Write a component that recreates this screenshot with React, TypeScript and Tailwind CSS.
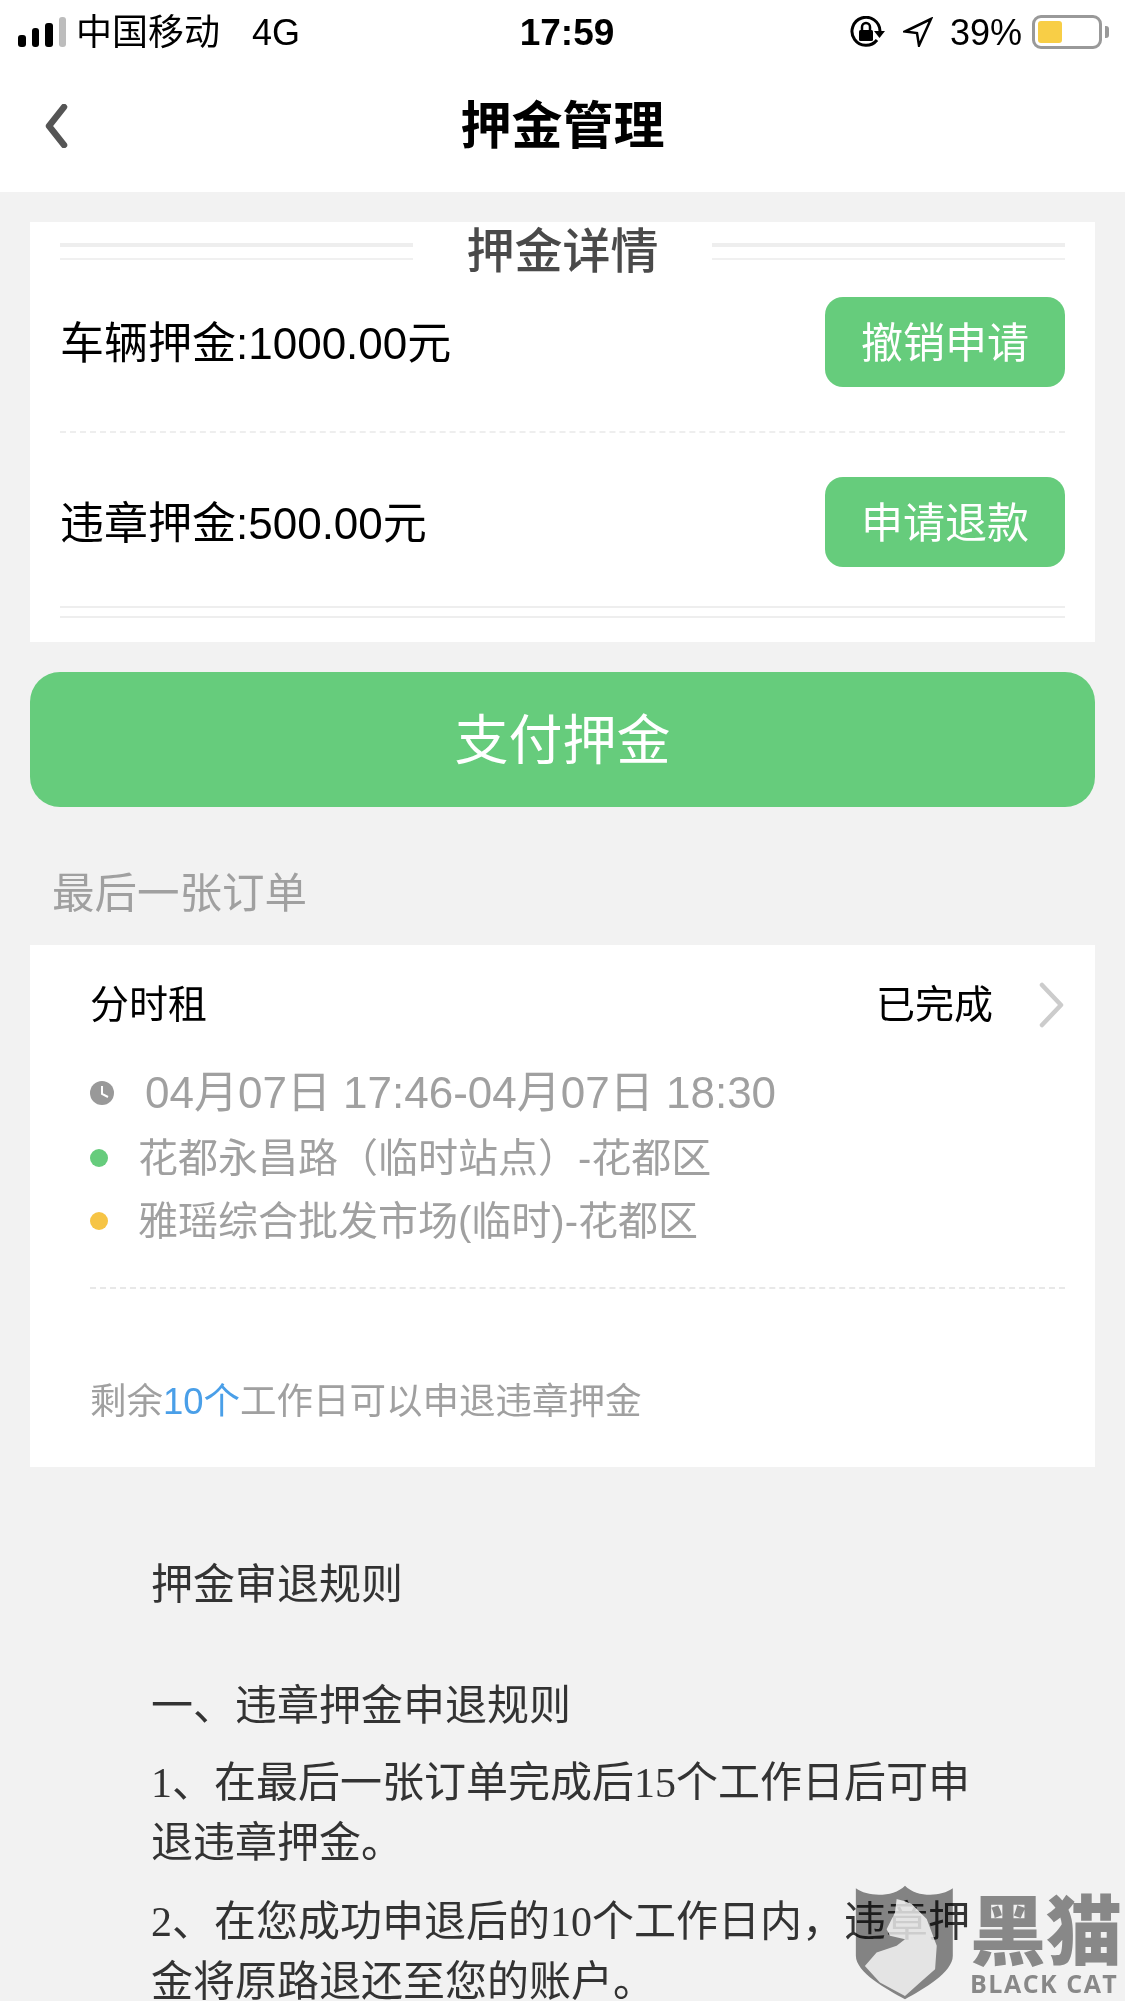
const sans = "font-['Liberation_Sans','Noto_Sans_CJK_SC',sans-serif]";

const SignalBars = () => (
  <div className="flex items-end gap-[6px] h-[30px] w-[48px]">
    <span className="w-[8px] h-[12px] rounded-[3px] bg-black" />
    <span className="w-[8px] h-[19px] rounded-[3px] bg-black" />
    <span className="w-[8px] h-[24px] rounded-[3px] bg-black" />
    <span className="w-[8px] h-[30px] rounded-[3px] bg-[#bdbdbd]" />
  </div>
);

const StatusBar = () => (
  <div className="grid grid-cols-3 items-center h-[64px] pl-[18px] pr-[16px] text-black">
    <div className="flex items-center">
      <SignalBars />
      <span className="ml-[10px] pt-[1px] text-[36px] leading-none">中国移动</span>
      <span className="ml-[32px] pt-[1px] text-[36px] leading-none">4G</span>
    </div>
    <div className="text-center pl-[7px] pt-[1px] text-[37px] leading-none font-bold">17:59</div>
    <div className="flex items-center justify-end">
      <svg width="36" height="32" viewBox="0 0 36 32" fill="none">
        <path d="M27 24A14 14 0 1 1 30 15" stroke="#000" strokeWidth="3" />
        <path d="M24 15h11l-5.500 7z" fill="#000" />
        <rect x="9" y="14" width="14" height="11" rx="1.500" fill="#000" />
        <path d="M12 14v-3a4 4 0 0 1 8 0v3" stroke="#000" strokeWidth="2.500" />
      </svg>
      <svg className="ml-[17px]" width="30" height="30" viewBox="0 0 30 30" fill="none">
        <path d="M28 2 2 14.500l12 1.500 2 12.500z" stroke="#000" strokeWidth="2.500" strokeLinejoin="miter" />
      </svg>
      <span className="ml-[17px] pt-[1px] text-[36px] leading-none">39%</span>
      <div className="ml-[10px] w-[70px] h-[34px] rounded-[9px] border-[3px] border-[#999999] p-[3px]">
        <div className="w-[24px] h-full rounded-[3px] bg-[#f8ce46]" />
      </div>
      <div className="ml-[3px] w-[4px] h-[12px] rounded-r-[3px] bg-[#999999]" />
    </div>
  </div>
);

const NavBar = () => (
  <div className="grid grid-cols-3 items-center h-[128px] pb-[4px]">
    <div className="pl-[44px] flex">
      <svg width="24" height="44" viewBox="0 0 24 44" fill="none">
        <path d="M20 3 5 22l15 19" stroke="#555555" strokeWidth="6.500" strokeLinecap="round" strokeLinejoin="round" />
      </svg>
    </div>
    <h1 className="text-center text-[51px] leading-none font-bold text-black whitespace-nowrap">押金管理</h1>
  </div>
);

const TitleLines = () => (
  <div className="flex-1 flex flex-col mt-[-2px]">
    <div className="h-[4px] bg-[#eeeeee]" />
    <div className="h-[2px] mt-[11px] bg-[#f0f0f0]" />
  </div>
);

const DepositRow = ({ label, action }: { label: string; action: string }) => (
  <div className="flex items-center justify-between h-[90px]">
    <span className="pt-[3px] text-[44px] leading-none text-black">{label}</span>
    <button className="w-[240px] h-[90px] pt-[3px] rounded-[18px] bg-[#66cc7c] text-white text-[42px] leading-none">{action}</button>
  </div>
);

const DepositCard = () => (
  <section className="bg-white h-[420px] px-[30px]">
    <div className="flex items-center h-[60px]">
      <TitleLines />
      <h2 className="w-[299px] text-center text-[48px] leading-none font-medium text-[#4a4a4a]">押金详情</h2>
      <TitleLines />
    </div>
    <div className="pt-[15px]">
      <DepositRow label="车辆押金:1000.00元" action="撤销申请" />
      <div className="mt-[44px] border-t-2 border-dashed border-[#eeeeee]" />
      <div className="mt-[44px]">
        <DepositRow label="违章押金:500.00元" action="申请退款" />
      </div>
      <div className="mt-[39px] h-[2px] bg-[#eeeeee]" />
      <div className="mt-[8px] h-[2px] bg-[#eeeeee]" />
    </div>
  </section>
);

const OrderCard = () => (
  <section className="bg-white h-[522px] pl-[60px] pr-[30px]">
    <div className="flex items-center justify-between h-[120px] text-[39px] leading-none text-black">
      <span>分时租</span>
      <div className="flex items-center">
        <span>已完成</span>
        <svg className="ml-[46px]" width="26" height="46" viewBox="0 0 26 46" fill="none">
          <path d="M3 3l19 20L3 43" stroke="#cccccc" strokeWidth="4.500" strokeLinecap="round" strokeLinejoin="round" />
        </svg>
      </div>
    </div>
    <div className="flex items-center h-[28px] mt-[14px] text-[#a0a0a0] text-[44px] leading-none">
      <svg width="24" height="24" viewBox="0 0 24 24">
        <circle cx="12" cy="12" r="12" fill="#999999" />
        <path d="M12 5v8l6 3" stroke="#fff" strokeWidth="2" fill="none" />
      </svg>
      <span className="ml-[31px]">04月07日 17:46-04月07日 18:30</span>
    </div>
    <div className="flex items-center h-[28px] mt-[37px] text-[#a0a0a0] text-[40px] leading-none">
      <span className="w-[18px] h-[18px] rounded-full bg-[#66cc7c]" />
      <span className="ml-[30px]">花都永昌路（临时站点）-花都区</span>
    </div>
    <div className="flex items-center h-[28px] mt-[35px] text-[#a0a0a0] text-[40px] leading-none">
      <span className="w-[18px] h-[18px] rounded-full bg-[#f6c445]" />
      <span className="ml-[30px]">雅瑶综合批发市场(临时)-花都区</span>
    </div>
    <div className="mt-[52px] border-t-2 border-dashed border-[#e8e8e8]" />
    <p className="mt-[95px] text-[36.500px] leading-none text-[#a0a0a0]">
      剩余<span className="text-[#4a9fe8]">10个</span>工作日可以申退违章押金
    </p>
  </section>
);

const Rules = () => (
  <section className="pl-[151px] w-[990px] text-[#333333] text-[42px] leading-[60px] font-['Liberation_Serif','Noto_Sans_CJK_SC',serif]">
    <p className="pt-[88px]">押金审退规则</p>
    <p className="mt-[61px]">一、违章押金申退规则</p>
    <p className="mt-[17px]">1、在最后一张订单完成后15个工作日后可申<br />退违章押金。</p>
    <p className="mt-[19px]">2、在您成功申退后的10个工作日内，违章押<br />金将原路退还至您的账户。</p>
  </section>
);

const Watermark = () => (
  <div className="absolute right-[3px] bottom-0 flex items-start">
    <svg className="mix-blend-multiply" width="104" height="117" viewBox="220 135 310 350">
      <path d="M228 148C265 175 340 175 375 140C410 175 480 175 518 148L518 350C518 400 430 450 375 480C320 450 228 400 228 350Z" fill="#8a8a8a" />
    </svg>
    <svg className="absolute left-0 top-0" width="104" height="117" viewBox="220 135 310 350">
      <path d="M350 180L372 186L395 195L440 240L470 320L465 390L420 430L375 470L300 430L255 380L290 340L350 320L375 300L330 290L320 270L345 220Z" fill="#ffffff" fillOpacity="0.78" />
    </svg>
    <div className="ml-[13px] w-[152px] flex flex-col text-[#888888]">
      <span className="mt-[2px] text-[76px] leading-[80px] font-black whitespace-nowrap font-['Noto_Sans_CJK_SC',sans-serif]">黑猫</span>
      <span className="mt-[7px] text-[25px] leading-[20px] tracking-[1.500px] font-bold whitespace-nowrap font-['Open_Sans',sans-serif]">BLACK CAT</span>
    </div>
  </div>
);

export default function App() {
  return (
    <div className={`relative w-[1125px] h-[2001px] overflow-hidden bg-[#f2f2f2] ${sans}`}>
      <header className="bg-white h-[192px]">
        <StatusBar />
        <NavBar />
      </header>
      <main className="px-[30px] pt-[30px]">
        <DepositCard />
        <button className="block mt-[30px] w-full h-[135px] pt-[2px] rounded-[30px] bg-[#66cc7c] text-white text-[54px] leading-none">支付押金</button>
        <h3 className="mt-[66px] ml-[22px] text-[42.500px] leading-none text-[#a0a0a0]">最后一张订单</h3>
        <div className="mt-[29px]">
          <OrderCard />
        </div>
      </main>
      <Rules />
      <Watermark />
    </div>
  );
}
